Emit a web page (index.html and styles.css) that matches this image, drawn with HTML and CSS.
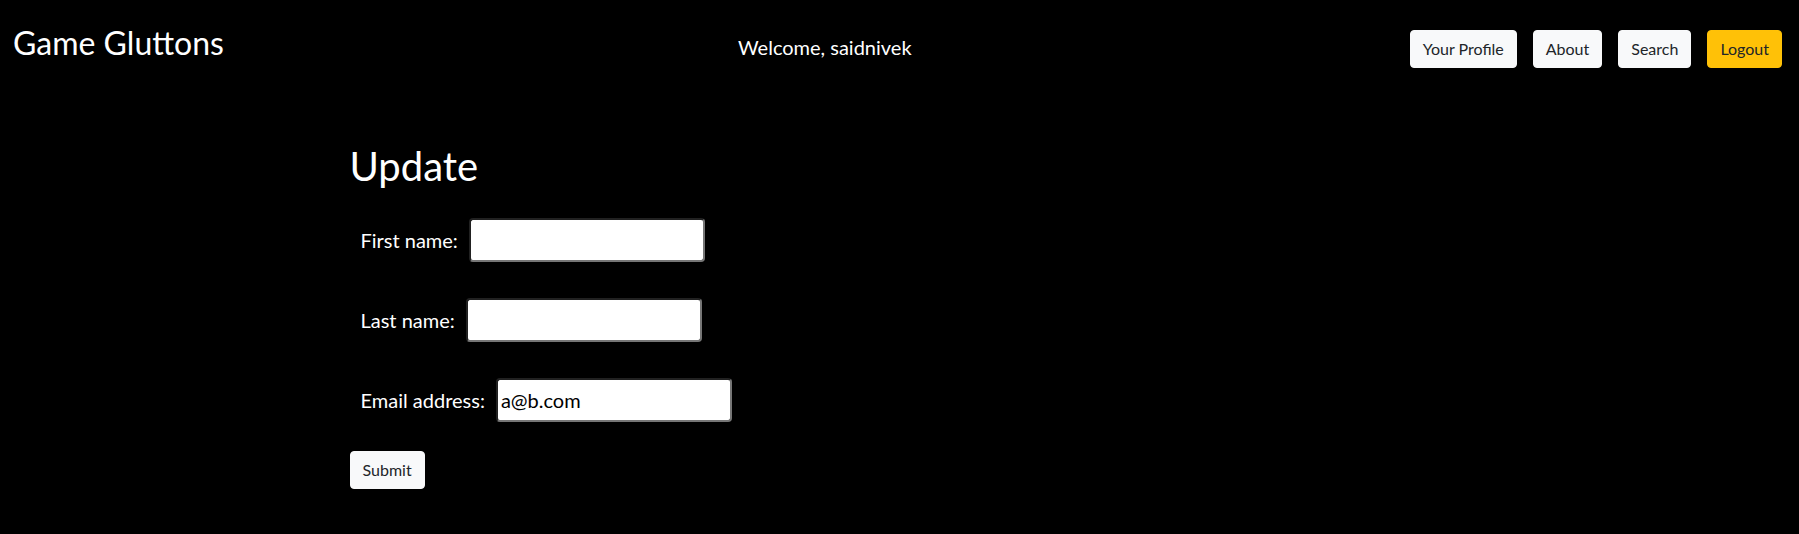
FILE: index.html
```html
<!DOCTYPE html>
<html lang="en">
<head>
<meta charset="utf-8">
<title>Game Gluttons</title>
<link rel="stylesheet" href="styles.css">
</head>
<body>
<header class="topbar">
  <a class="brand" href="#">Game Gluttons</a>
  <span class="welcome">Welcome, saidnivek</span>
  <nav class="actions">
    <button class="btn btn-light" type="button">Your Profile</button>
    <button class="btn btn-light" type="button">About</button>
    <button class="btn btn-light" type="button">Search</button>
    <button class="btn btn-warning" type="button">Logout</button>
  </nav>
</header>
<main class="page">
  <h1 class="title">Update</h1>
  <form class="form">
    <div class="row">
      <label class="label" for="first">First name:</label>
      <input class="field" id="first" type="text">
    </div>
    <div class="row">
      <label class="label" for="last">Last name:</label>
      <input class="field" id="last" type="text">
    </div>
    <div class="row">
      <label class="label" for="email">Email address:</label>
      <input class="field" id="email" type="email" value="a@b.com">
    </div>
    <button class="btn btn-light btn-submit" type="submit">Submit</button>
  </form>
</main>
</body>
</html>
```

FILE: styles.css
```css
* { box-sizing: border-box; }

html, body {
  margin: 0;
  padding: 0;
  background: #000;
  color: #fff;
  font-family: Lato, "Noto Sans", sans-serif;
}

.topbar {
  display: flex;
  align-items: baseline;
  justify-content: space-between;
  padding: 24px 17px 0 13px;
}

.brand {
  font-size: 32px;
  line-height: 1.2;
  color: #fff;
  text-decoration: none;
  margin-right: 16px;
}

.welcome {
  font-size: 20px;
  line-height: 1.5;
}

.actions {
  display: flex;
  align-items: baseline;
  gap: 16px;
}

.btn {
  font-family: Lato, "Noto Sans", sans-serif;
  font-size: 16px;
  line-height: 24px;
  padding: 6px 12px;
  border: 1px solid transparent;
  border-radius: 4px;
  color: #212529;
  cursor: pointer;
}

.btn-light { background: #f8f9fa; border-color: #f8f9fa; }
.btn-warning { background: #ffc107; border-color: #ffc107; }

.page {
  width: 1100px;
  margin: 0 auto;
  padding-top: 74px;
}

.title {
  margin: 0 0 28px;
  font-size: 40px;
  line-height: 1.2;
  font-weight: 400;
}

.form {
  display: flex;
  flex-direction: column;
  align-items: flex-start;
}

.row {
  display: flex;
  align-items: center;
  gap: 11px;
  padding-left: 11px;
  margin-bottom: 36px;
}

.row:last-of-type { margin-bottom: 29px; }

.label {
  font-size: 20px;
  line-height: 24px;
}

.field {
  width: 236px;
  height: 44px;
  padding: 0 3px;
  font-family: Lato, "Noto Sans", sans-serif;
  font-size: 20px;
  color: #000;
  background: #fff;
  border: 2px inset #767676;
  border-radius: 4px;
}

.btn-submit {
  font-size: 16px;
}
```
